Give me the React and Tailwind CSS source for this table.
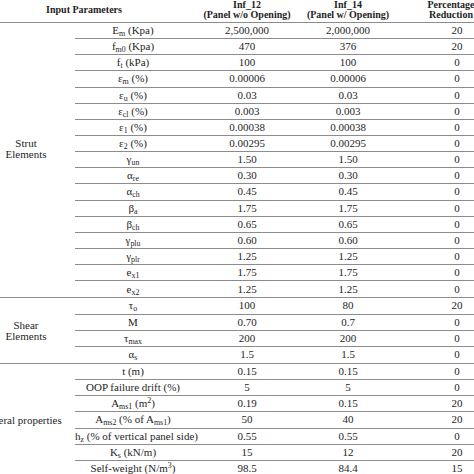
import React from "react";

const S = ({ children }) => <sub className="text-[0.72em]">{children}</sub>;
const P = ({ children }) => <sup className="text-[0.72em]">{children}</sup>;

const GROUPS = [
    {
        label: <>Strut<br />Elements</>,
        shift: "pb-[22px]",
        rows: [
            [<>E<S>m</S> (Kpa)</>, "2,500,000", "2,000,000", "20"],
            [<>f<S>m0</S> (Kpa)</>, "470", "376", "20"],
            [<>f<S>t</S> (kPa)</>, "100", "100", "0"],
            [<>ε<S>m</S> (%)</>, "0.00006", "0.00006", "0"],
            [<>ε<S>u</S> (%)</>, "0.03", "0.03", "0"],
            [<>ε<S>cl</S> (%)</>, "0.003", "0.003", "0"],
            [<>ε<S>1</S> (%)</>, "0.00038", "0.00038", "0"],
            [<>ε<S>2</S> (%)</>, "0.00295", "0.00295", "0"],
            [<>γ<S>un</S></>, "1.50", "1.50", "0"],
            [<>α<S>re</S></>, "0.30", "0.30", "0"],
            [<>α<S>ch</S></>, "0.45", "0.45", "0"],
            [<>β<S>a</S></>, "1.75", "1.75", "0"],
            [<>β<S>ch</S></>, "0.65", "0.65", "0"],
            [<>γ<S>plu</S></>, "0.60", "0.60", "0"],
            [<>γ<S>plr</S></>, "1.25", "1.25", "0"],
            [<>e<S>x1</S></>, "1.75", "1.75", "0"],
            [<>e<S>x2</S></>, "1.25", "1.25", "0"],
        ],
    },
    {
        label: <>Shear<br />Elements</>,
        shift: "",
        rows: [
            [<>τ<S>o</S></>, "100", "80", "20"],
            [<>M</>, "0.70", "0.7", "0"],
            [<>τ<S>max</S></>, "200", "200", "0"],
            [<>α<S>s</S></>, "1.5", "1.5", "0"],
        ],
    },
    {
        label: <>General properties</>,
        shift: "pr-[10px]",
        rows: [
            [<>t (m)</>, "0.15", "0.15", "0"],
            [<>OOP failure drift (%)</>, "5", "5", "0"],
            [<>A<S>ms1</S> (m<P>2</P>)</>, "0.19", "0.15", "20"],
            [<>A<S>ms2</S> (% of A<S>ms1</S>)</>, "50", "40", "20"],
            [<>h<S>z</S> (% of vertical panel side)</>, "0.55", "0.55", "0"],
            [<>K<S>s</S> (kN/m)</>, "15", "12", "20"],
            [<>Self-weight (N/m<P>3</P>)</>, "98.5", "84.4", "15"],
        ],
    },
];

export default function App() {
    return (
        <div className="w-[474px] h-[474px] overflow-hidden bg-white text-[#1e1e1e] font-['Liberation_Serif',serif]">
            <div className="ml-[-23px] w-[544px]">
                {/* Header */}
                <div className="h-[23px] border-b border-[#8c8c8c] grid grid-cols-[214px_112px_90px_128px] text-[10px] font-bold leading-[9.5px]">
                    <div className="h-[19.5px] flex items-center justify-center">Input Parameters</div>
                    <div className="h-[19.5px] flex flex-col items-center justify-center">
                        <span>Inf_12</span>
                        <span>(Panel w/o Opening)</span>
                    </div>
                    <div className="h-[19.5px] flex flex-col items-center justify-center">
                        <span>Inf_14</span>
                        <span>(Panel w/ Opening)</span>
                    </div>
                    <div className="h-[19.5px] flex flex-col items-center justify-center pr-[12px]">
                        <span>Percentage</span>
                        <span>Reduction</span>
                    </div>
                </div>

                {GROUPS.map((g, gi) => (
                    <div key={gi} className="flex border-b border-[#8c8c8c]">
                        <div className={`w-[98px] flex items-center justify-center text-center text-[11px] leading-[11px] whitespace-nowrap ${g.shift}`}>
                            <span>{g.label}</span>
                        </div>
                        <div className="flex-1 flex flex-col">
                            {g.rows.map((r, ri) => (
                                <div
                                    key={ri}
                                    className={`h-[16.15px] grid grid-cols-[116px_112px_90px_128px] items-center text-[11px] leading-none ${ri < g.rows.length - 1 ? "border-b border-[#8c8c8c]" : ""}`}
                                >
                                    <div className="text-center whitespace-nowrap">{r[0]}</div>
                                    <div className="text-center">{r[1]}</div>
                                    <div className="text-center">{r[2]}</div>
                                    <div className="text-center">{r[3]}</div>
                                </div>
                            ))}
                        </div>
                    </div>
                ))}
            </div>
        </div>
    );
}
